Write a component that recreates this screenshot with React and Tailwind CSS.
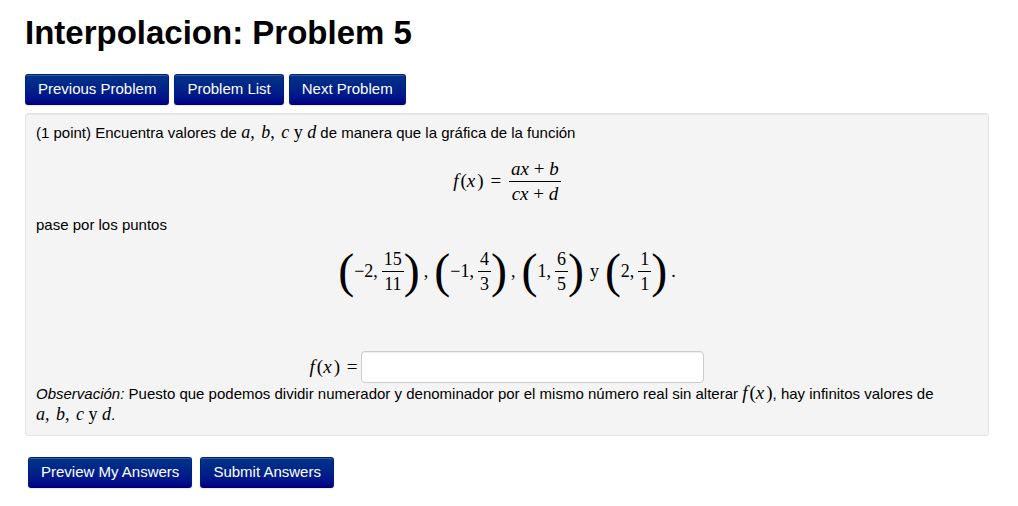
import { useState } from 'react';
import clsx from 'clsx';

const points = [
  { x: '−2', num: '15', den: '11', after: ',' },
  { x: '−1', num: '4', den: '3', after: ',' },
  { x: '1', num: '6', den: '5', after: 'y' },
  { x: '2', num: '1', den: '1', after: '.' },
];

const separatorStyles = {
  ',': 'ml-1 mr-1.5',
  y: 'mx-1.5',
  '.': 'ml-1',
};

const buttonStyle =
  'h-[31px] px-3 pb-0.5 rounded-[3px] border border-[#00207a] border-b-[#000066] bg-linear-to-b from-[#003388] to-[#000088] text-[15px] leading-5 text-white shadow-[inset_0_1px_0_rgba(255,255,255,0.2),0_1px_2px_rgba(0,0,0,0.1)] cursor-pointer';

const Button = ({ children, type = 'button' }) => (
  <button type={type} className={buttonStyle}>
    {children}
  </button>
);

const MathText = ({ children, className }) => (
  <span className={clsx("font-['Liberation_Serif',serif]", className)}>{children}</span>
);

// Inline function notation, f(x)
const Fx = () => (
  <>
    <i className="mr-0.5">f</i>(<i className="mr-0.5">x</i>)
  </>
);

const Coefficients = () => (
  <MathText className="text-lg leading-4 whitespace-nowrap">
    <i>a</i>, <i className="ml-0.5">b</i>, <i className="ml-0.5">c</i> y <i>d</i>
  </MathText>
);

const Fraction = ({ num, den, className }) => (
  <span className={clsx('inline-flex flex-col items-center', className)}>
    <span className="px-0.5 border-b border-black">{num}</span>
    <span className="px-0.5">{den}</span>
  </span>
);

const Point = ({ x, num, den }) => (
  <span className="flex items-center">
    <span className="text-5xl leading-[48px]">(</span>
    <span>{x},</span>
    <Fraction num={num} den={den} className="ml-1 leading-6" />
    <span className="text-5xl leading-[48px]">)</span>
  </span>
);

const App = () => {
  const [answer, setAnswer] = useState('');

  return (
    <main className="pl-[25px] pr-[29px] pt-[13px] pb-4 font-['Liberation_Sans',Arial,sans-serif] text-[15px] leading-5 text-black">
      <h1 className="text-[33px] leading-10 font-bold">Interpolacion: Problem 5</h1>

      <nav className="mt-[21px] flex gap-[5px]">
        <Button>Previous Problem</Button>
        <Button>Problem List</Button>
        <Button>Next Problem</Button>
      </nav>

      <form onSubmit={(e) => e.preventDefault()}>
        <div className="mt-2 px-2.5 pt-[9px] pb-2.5 rounded-[3px] border border-[#e3e3e3] bg-[#f4f4f4] shadow-[inset_0_1px_1px_rgba(0,0,0,0.05)]">
          <p>
            (1 point) Encuentra valores de <Coefficients /> de manera que la gráfica de la función
          </p>

          <MathText className="mt-3.5 h-12 flex items-center justify-center text-[19px]">
            <span>
              <Fx /> <span className="ml-0.5">=</span>
            </span>
            <Fraction
              className="ml-2 leading-6"
              num={<><i>ax</i> + <i>b</i></>}
              den={<><i>cx</i> + <i>d</i></>}
            />
          </MathText>

          <p className="mt-2.5">pase por los puntos</p>

          <MathText className="mt-2.5 h-[52px] flex items-center justify-center text-lg">
            {points.map((point) => (
              <span key={point.x} className="flex items-center">
                <Point {...point} />
                <span className={separatorStyles[point.after]}>{point.after}</span>
              </span>
            ))}
          </MathText>

          <div className="mt-[54px] flex items-center justify-center gap-1">
            <label htmlFor="answer">
              <MathText className="text-[19px]">
                <Fx /> <span className="ml-0.5">=</span>
              </MathText>
            </label>
            <input
              id="answer"
              type="text"
              value={answer}
              onChange={(e) => setAnswer(e.target.value)}
              className="w-[343px] h-8 px-1.5 rounded border border-[#cccccc] bg-white shadow-[inset_0_1px_1px_rgba(0,0,0,0.075)]"
            />
          </div>

          <p className="leading-[21px]">
            <em>Observación:</em> Puesto que podemos dividir numerador y denominador por el mismo
            número real sin alterar{' '}
            <MathText className="text-[19px] leading-4">
              <Fx />
            </MathText>
            , hay infinitos valores de <Coefficients />.
          </p>
        </div>

        <div className="mt-[21px] ml-[3px] flex gap-2">
          <Button type="submit">Preview My Answers</Button>
          <Button type="submit">Submit Answers</Button>
        </div>
      </form>
    </main>
  );
};

export default App;
